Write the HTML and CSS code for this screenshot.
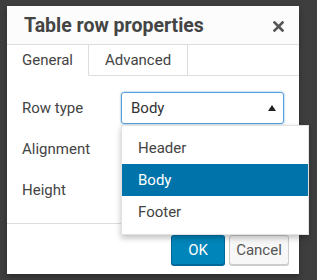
FILE: index.html
```html
<!DOCTYPE html>
<html lang="en">
<head>
    <meta charset="UTF-8">
    <title>Table row properties</title>
    <link rel="stylesheet" href="styles.css">
</head>
<body>
    <div class="dialog">
        <div class="dialog-head">
            <span class="dialog-title">Table row properties</span>
            <svg class="close" width="11" height="11" viewBox="0 0 11 11">
                <path d="M1.5 1.5 L9.5 9.5 M9.5 1.5 L1.5 9.5" stroke="#555" stroke-width="2.6" stroke-linecap="square"/>
            </svg>
        </div>

        <div class="tabs">
            <div class="tab active">General</div>
            <div class="tab">Advanced</div>
        </div>

        <div class="form">
            <div class="form-row">
                <span class="form-label">Row type</span>
                <div class="select">
                    <span>Body</span>
                    <svg class="caret" width="8" height="6" viewBox="0 0 8 6"><path d="M4 0 L8 6 L0 6 Z" fill="#222"/></svg>
                    <ul class="menu">
                        <li>Header</li>
                        <li class="selected">Body</li>
                        <li>Footer</li>
                    </ul>
                </div>
            </div>
            <div class="form-row">
                <span class="form-label">Alignment</span>
            </div>
            <div class="form-row">
                <span class="form-label">Height</span>
            </div>
        </div>

        <div class="dialog-foot">
            <button class="btn btn-primary">OK</button>
            <button class="btn btn-cancel">Cancel</button>
        </div>
    </div>
</body>
</html>
```

FILE: styles.css
```css
body {
    margin: 0;
    padding: 6px 0 0 7px;
    background: #3e3e3e;
    font-family: Roboto, 'Liberation Sans', sans-serif;
    color: #444;
    height: 280px;
    box-sizing: border-box;
    overflow: hidden;
}

.dialog {
    width: 292px;
    height: 268px;
    background: #ffffff;
    display: flex;
    flex-direction: column;
    box-shadow: 0 3px 6px rgba(0, 0, 0, 0.3);
}

.dialog-head {
    height: 38px;
    display: flex;
    align-items: center;
    justify-content: space-between;
    padding: 0 15px 0 17px;
    background: #fcfcfc;
    border-bottom: 1px solid #dddddd;
}

.dialog-title {
    font-size: 19.5px;
    font-weight: bold;
    color: #444;
}

.close {
    margin-top: 2px;
}

.tabs {
    display: flex;
    height: 30px;
    border-bottom: 1px solid #dddddd;
}

.tab {
    display: flex;
    align-items: center;
    padding: 0 15px;
    font-size: 15px;
    color: #444;
    border-right: 1px solid #dddddd;
    margin-bottom: -1px;
    border-bottom: 1px solid #dddddd;
}

.tab.active {
    border-bottom-color: #ffffff;
}

.tab + .tab {
    padding: 0 16px;
}

.form {
    flex: 1;
    padding: 16px 15px 0 15px;
    display: flex;
    flex-direction: column;
    gap: 9px;
}

.form-row {
    height: 32px;
    display: flex;
    align-items: center;
}

.form-label {
    width: 99px;
    font-size: 15px;
    color: #444;
}

.select {
    position: relative;
    width: 163px;
    height: 32px;
    box-sizing: border-box;
    border: 1px solid #5b9dd9;
    border-radius: 3px;
    box-shadow: 0 0 2px rgba(30, 140, 190, 0.8);
    display: flex;
    align-items: center;
    justify-content: space-between;
    padding: 0 7px 0 9px;
    font-size: 15px;
    color: #333;
}

.caret {
    margin-top: -1px;
}

.menu {
    position: absolute;
    top: 32px;
    left: -1px;
    width: 188px;
    margin: 0;
    padding: 6px 0;
    list-style: none;
    background: #ffffff;
    border: 1px solid #e2e2e2;
    box-sizing: border-box;
    box-shadow: 0 3px 6px rgba(0, 0, 0, 0.25);
}

.menu li {
    height: 32px;
    line-height: 32px;
    padding-left: 16px;
    font-size: 15px;
    color: #444;
}

.menu li.selected {
    background: #0073aa;
    color: #ffffff;
}

.dialog-foot {
    border-top: 1px solid #dddddd;
    height: 51px;
    display: flex;
    justify-content: flex-end;
    align-items: flex-start;
    gap: 4px;
    padding: 11px 10px 0 0;
    box-sizing: border-box;
}

.btn {
    height: 30px;
    padding: 0;
    font-family: Roboto, 'Liberation Sans', sans-serif;
    font-size: 15px;
    border-radius: 3px;
    border: 1px solid #cccccc;
    background: #f7f7f7;
    color: #555;
    box-shadow: 0 1px 0 #cccccc;
}

.btn-primary {
    width: 54px;
    background: #0085ba;
    border-color: #0073aa #006799 #006799;
    box-shadow: 0 1px 0 #006799;
    color: #ffffff;
}

.btn-cancel {
    width: 60px;
}
```
